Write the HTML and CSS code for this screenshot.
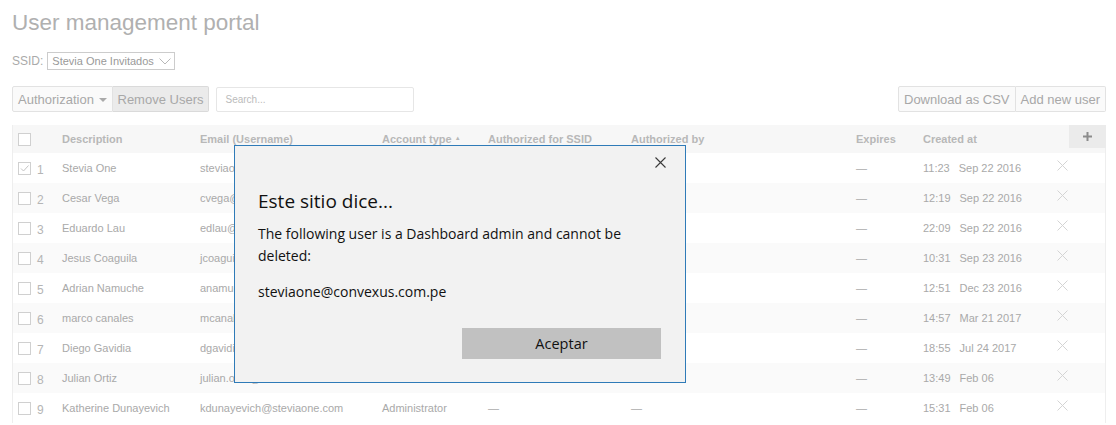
FILE: index.html
```html
<!DOCTYPE html>
<html lang="en">
<head>
    <meta charset="UTF-8">
    <meta name="viewport" content="width=device-width, initial-scale=1.0">
    <title>User management portal</title>
    <link rel="stylesheet" href="styles.css">
</head>
<body>

    <h1 class="title">User management portal</h1>

    <!-- SSID picker -->
    <div class="ssid-row">
        <span class="ssid-label">SSID:</span>
        <div class="ssid-select">
            <span>Stevia One Invitados</span>
            <svg class="chevron" width="12" height="7" viewBox="0 0 12 7"><polyline points="0.5,0.5 6,6 11.5,0.5" fill="none" stroke="#b8b8b8" stroke-width="1"/></svg>
        </div>
    </div>

    <!-- Toolbar -->
    <div class="toolbar">
        <div class="btn-group">
            <button class="btn">Authorization <span class="caret"></span></button>
            <button class="btn btn-active">Remove Users</button>
        </div>
        <input class="search" type="text" placeholder="Search...">
        <div class="btn-group toolbar-right">
            <button class="btn">Download as CSV</button>
            <button class="btn">Add new user</button>
        </div>
    </div>

    <!-- Users table -->
    <div class="users">
        <div class="row head">
            <div class="cell-check"><span class="checkbox"></span></div>
            <div>Description</div>
            <div>Email (Username)</div>
            <div>Account type <span class="sort">&#9650;</span></div>
            <div>Authorized for SSID</div>
            <div>Authorized by</div>
            <div>Expires</div>
            <div>Created at</div>
            <div></div>
            <div class="add-col"><svg width="9" height="9" viewBox="0 0 9 9"><path d="M4.5 0 V9 M0 4.5 H9" stroke="#8c8c8c" stroke-width="2"/></svg></div>
        </div>

        <div class="row">
            <div class="cell-check"><span class="checkbox checked"><svg width="11" height="11" viewBox="0 0 11 11"><polyline points="2,5.5 4.5,8 9.5,2.5" fill="none" stroke="#c4c4c4" stroke-width="1"/></svg></span><span class="num">1</span></div>
            <div>Stevia One</div>
            <div>steviaone@convexus.com.pe</div>
            <div>Administrator</div>
            <div>—</div>
            <div>—</div>
            <div>—</div>
            <div class="created"><span>11:23</span><span>Sep 22 2016</span></div>
            <div class="del"><svg width="11" height="11" viewBox="0 0 11 11"><path d="M0.5 0.5 L10.5 10.5 M10.5 0.5 L0.5 10.5" stroke="#d4d4d4" stroke-width="1"/></svg></div>
            <div></div>
        </div>

        <div class="row alt">
            <div class="cell-check"><span class="checkbox"></span><span class="num">2</span></div>
            <div>Cesar Vega</div>
            <div>cvega@steviaone.com</div>
            <div>Administrator</div>
            <div>—</div>
            <div>—</div>
            <div>—</div>
            <div class="created"><span>12:19</span><span>Sep 22 2016</span></div>
            <div class="del"><svg width="11" height="11" viewBox="0 0 11 11"><path d="M0.5 0.5 L10.5 10.5 M10.5 0.5 L0.5 10.5" stroke="#d4d4d4" stroke-width="1"/></svg></div>
            <div></div>
        </div>

        <div class="row">
            <div class="cell-check"><span class="checkbox"></span><span class="num">3</span></div>
            <div>Eduardo Lau</div>
            <div>edlau@steviaone.com</div>
            <div>Administrator</div>
            <div>—</div>
            <div>—</div>
            <div>—</div>
            <div class="created"><span>22:09</span><span>Sep 22 2016</span></div>
            <div class="del"><svg width="11" height="11" viewBox="0 0 11 11"><path d="M0.5 0.5 L10.5 10.5 M10.5 0.5 L0.5 10.5" stroke="#d4d4d4" stroke-width="1"/></svg></div>
            <div></div>
        </div>

        <div class="row alt">
            <div class="cell-check"><span class="checkbox"></span><span class="num">4</span></div>
            <div>Jesus Coaguila</div>
            <div>jcoaguila@steviaone.com</div>
            <div>Administrator</div>
            <div>—</div>
            <div>—</div>
            <div>—</div>
            <div class="created"><span>10:31</span><span>Sep 23 2016</span></div>
            <div class="del"><svg width="11" height="11" viewBox="0 0 11 11"><path d="M0.5 0.5 L10.5 10.5 M10.5 0.5 L0.5 10.5" stroke="#d4d4d4" stroke-width="1"/></svg></div>
            <div></div>
        </div>

        <div class="row">
            <div class="cell-check"><span class="checkbox"></span><span class="num">5</span></div>
            <div>Adrian Namuche</div>
            <div>anamuche@steviaone.com</div>
            <div>Administrator</div>
            <div>—</div>
            <div>—</div>
            <div>—</div>
            <div class="created"><span>12:51</span><span>Dec 23 2016</span></div>
            <div class="del"><svg width="11" height="11" viewBox="0 0 11 11"><path d="M0.5 0.5 L10.5 10.5 M10.5 0.5 L0.5 10.5" stroke="#d4d4d4" stroke-width="1"/></svg></div>
            <div></div>
        </div>

        <div class="row alt">
            <div class="cell-check"><span class="checkbox"></span><span class="num">6</span></div>
            <div>marco canales</div>
            <div>mcanales@steviaone.com</div>
            <div>Administrator</div>
            <div>—</div>
            <div>—</div>
            <div>—</div>
            <div class="created"><span>14:57</span><span>Mar 21 2017</span></div>
            <div class="del"><svg width="11" height="11" viewBox="0 0 11 11"><path d="M0.5 0.5 L10.5 10.5 M10.5 0.5 L0.5 10.5" stroke="#d4d4d4" stroke-width="1"/></svg></div>
            <div></div>
        </div>

        <div class="row">
            <div class="cell-check"><span class="checkbox"></span><span class="num">7</span></div>
            <div>Diego Gavidia</div>
            <div>dgavidia@steviaone.com</div>
            <div>Administrator</div>
            <div>—</div>
            <div>—</div>
            <div>—</div>
            <div class="created"><span>18:55</span><span>Jul 24 2017</span></div>
            <div class="del"><svg width="11" height="11" viewBox="0 0 11 11"><path d="M0.5 0.5 L10.5 10.5 M10.5 0.5 L0.5 10.5" stroke="#d4d4d4" stroke-width="1"/></svg></div>
            <div></div>
        </div>

        <div class="row alt">
            <div class="cell-check"><span class="checkbox"></span><span class="num">8</span></div>
            <div>Julian Ortiz</div>
            <div>julian.ortiz@steviaone.com</div>
            <div>Administrator</div>
            <div>—</div>
            <div>—</div>
            <div>—</div>
            <div class="created"><span>13:49</span><span>Feb 06</span></div>
            <div class="del"><svg width="11" height="11" viewBox="0 0 11 11"><path d="M0.5 0.5 L10.5 10.5 M10.5 0.5 L0.5 10.5" stroke="#d4d4d4" stroke-width="1"/></svg></div>
            <div></div>
        </div>

        <div class="row">
            <div class="cell-check"><span class="checkbox"></span><span class="num">9</span></div>
            <div>Katherine Dunayevich</div>
            <div>kdunayevich@steviaone.com</div>
            <div>Administrator</div>
            <div>—</div>
            <div>—</div>
            <div>—</div>
            <div class="created"><span>15:31</span><span>Feb 06</span></div>
            <div class="del"><svg width="11" height="11" viewBox="0 0 11 11"><path d="M0.5 0.5 L10.5 10.5 M10.5 0.5 L0.5 10.5" stroke="#d4d4d4" stroke-width="1"/></svg></div>
            <div></div>
        </div>
    </div>

    <!-- Browser alert dialog -->
    <div class="dialog">
        <div class="dialog-close">
            <svg width="11" height="11" viewBox="0 0 11 11"><path d="M0.5 0.5 L10.5 10.5 M10.5 0.5 L0.5 10.5" stroke="#3a3a3a" stroke-width="1.1"/></svg>
        </div>
        <div class="dialog-title">Este sitio dice...</div>
        <p class="dialog-msg">The following user is a Dashboard admin and cannot be deleted:</p>
        <p class="dialog-msg dialog-email">steviaone@convexus.com.pe</p>
        <div class="dialog-actions">
            <button class="dialog-btn">Aceptar</button>
        </div>
    </div>

</body>
</html>
```

FILE: styles.css
```css
body {
    margin: 0;
    padding: 8px 10px 0 12px;
    font-family: "Liberation Sans", Arial, sans-serif;
    color: #aaa;
    background: #fff;
    overflow: hidden;
}

.title {
    margin: 0;
    font-size: 22.5px;
    font-weight: normal;
    line-height: 30px;
    color: #b0b0b0;
}

/* SSID */
.ssid-row {
    display: flex;
    align-items: center;
    margin-top: 14px;
    height: 18px;
}

.ssid-label {
    font-size: 12px;
    color: #aaa;
    margin-right: 4px;
}

.ssid-select {
    display: flex;
    align-items: center;
    gap: 4px;
    box-sizing: border-box;
    width: 128px;
    height: 18px;
    padding: 0 3px 0 4px;
    border: 1px solid #ccc;
    font-size: 11px;
    color: #999;
    white-space: nowrap;
}

.chevron {
    margin-left: auto;
    flex-shrink: 0;
}

/* Toolbar */
.toolbar {
    display: flex;
    align-items: center;
    margin-top: 16px;
    height: 26px;
}

.btn-group {
    display: flex;
    height: 26px;
}

.btn {
    box-sizing: border-box;
    height: 26px;
    padding: 0 5px;
    border: 1px solid #e2e2e2;
    background: #fafafa;
    font-family: "Liberation Sans", Arial, sans-serif;
    font-size: 13px;
    color: #a8a8a8;
    border-radius: 0;
}

.btn + .btn {
    border-left: 0;
}

.btn-group .btn:first-child { border-radius: 2px 0 0 2px; }
.btn-group .btn:last-child { border-radius: 0 2px 2px 0; }

.btn-active {
    background: #ebebeb;
    border-color: #dadada;
}

.caret {
    display: inline-block;
    width: 0;
    height: 0;
    margin-left: 1px;
    vertical-align: middle;
    border-top: 4px solid #aaa;
    border-left: 4px solid transparent;
    border-right: 4px solid transparent;
}

.search {
    box-sizing: border-box;
    width: 198px;
    height: 25px;
    margin-left: 7px;
    padding: 0 8px;
    border: 1px solid #e6e6e6;
    border-radius: 2px;
    font-family: "Liberation Sans", Arial, sans-serif;
    font-size: 10px;
    outline: none;
}

.search::placeholder {
    color: #bbb;
}

.toolbar-right {
    margin-left: auto;
}

/* Table */
.users {
    margin-top: 13px;
    border-left: 1px solid #eee;
    border-right: 1px solid #eee;
    box-sizing: border-box;
}

.row {
    display: grid;
    grid-template-columns: 49px 138px 182px 106px 143px 225px 67px 134px 12px 37px;
    align-items: center;
    height: 30px;
    font-size: 11px;
    color: #a9a9a9;
    white-space: nowrap;
}

.row.alt {
    background: #fafafa;
}

.row.head {
    height: 28px;
    background: #f7f7f7;
    font-weight: bold;
    color: #b8b8b8;
}

.sort {
    font-size: 6px;
    vertical-align: 3px;
}

.add-col {
    align-self: start;
    display: flex;
    align-items: center;
    justify-content: center;
    height: 23px;
    background: #ebebeb;
}

.cell-check {
    display: flex;
    align-items: center;
    padding-left: 5px;
}

.checkbox {
    display: flex;
    align-items: center;
    justify-content: center;
    box-sizing: border-box;
    width: 13px;
    height: 13px;
    border: 1px solid #d0d0d0;
    background: #fff;
}

.num {
    margin-left: 6px;
    margin-top: 4px;
    font-size: 12px;
    color: #b5b5b5;
}

.created {
    display: flex;
    gap: 9px;
}

.del {
    display: flex;
    margin-top: -5px;
}

/* Alert dialog */
.dialog {
    position: absolute;
    left: 234px;
    top: 145px;
    width: 452px;
    height: 238px;
    box-sizing: border-box;
    border: 1px solid #2f7bb8;
    background: #f2f2f2;
    padding: 0 24px 0 23px;
    font-family: "Open Sans", "Noto Sans", sans-serif;
    color: #111;
}

.dialog-close {
    display: flex;
    justify-content: flex-end;
    padding-top: 11px;
    margin-right: -5px;
    height: 11px;
}

.dialog-title {
    margin-top: 19px;
    font-size: 19px;
    line-height: 28px;
}

.dialog-msg {
    margin: 8px 0 0;
    font-size: 14px;
    line-height: 22px;
}

.dialog-email {
    margin-top: 14px;
}

.dialog-actions {
    display: flex;
    justify-content: flex-end;
    margin-top: 25px;
}

.dialog-btn {
    width: 199px;
    height: 31px;
    border: 0;
    background: #c1c1c1;
    font-family: "Open Sans", "Noto Sans", sans-serif;
    font-size: 14.5px;
    color: #111;
}
```
